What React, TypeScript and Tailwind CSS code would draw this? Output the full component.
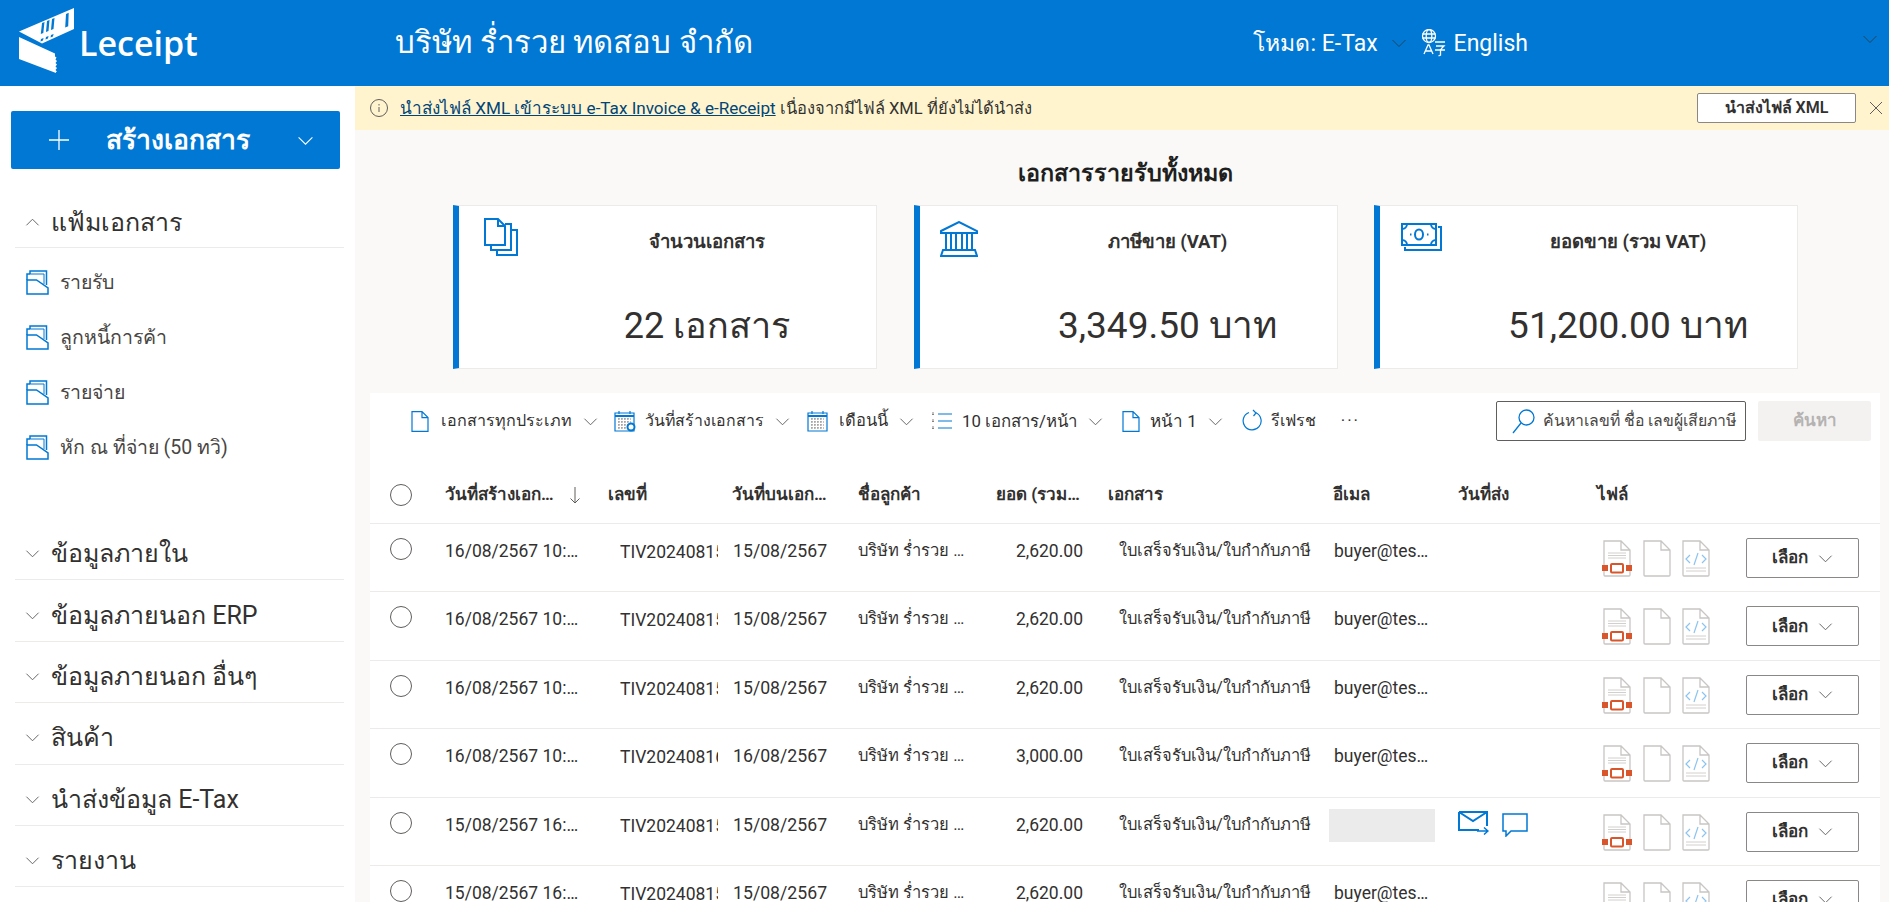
import React from "react";

const Chev = ({ up, className = "", color = "currentColor", size = 16 }: { up?: boolean; className?: string; color?: string; size?: number }) => (
  <svg width={size} height={size} viewBox="0 0 16 16" className={"shrink-0 " + className} fill="none" stroke={color} strokeWidth="1">
    <path d={up ? "M1.5 11 8 4.5 14.5 11" : "M1.5 5 8 11.5 14.5 5"} />
  </svg>
);

const Logo = () => (
  <svg width="58" height="70" viewBox="0 0 58 70" className="shrink-0">
    <path fillRule="evenodd" fill="#fff" d="M1 23.5 56 0v21L24 35.5 1 23.5ZM24 15l-1.200 11 2.500-1 1.200-11-2.500 1Zm5-2-1 11 2.500-1 1-11-2.500 1Zm5-2-1 11 2.500-1 1-11-2.500 1Zm14-5-.8 13.500 3-1.300.5-13.500-2.700 1.300ZM23 31l-.5 2.500 2.500-1 .5-2.500-2.500 1Zm5-2-.5 2.500 2.500-1 .5-2.500-2.500 1Zm5-2-.5 2.500 2.500-1 .5-2.500-2.500 1Z" />
    <path fill="#fff" d="M1 29 37 45.500v3l1.500 1-1 2 1.500 1.500-1.500 2 1.500 1.500-1.500 2 1.500 1.500-1.500 2 1.500 1.500-1 .5v1L1 51V29Z" />
  </svg>
);

const Globe = () => (
  <svg width="25" height="28" viewBox="0 0 25 28" fill="none" stroke="#fff" strokeWidth="1.300" className="shrink-0">
    <circle cx="8" cy="7" r="6.500" />
    <ellipse cx="8" cy="7" rx="2.800" ry="6.500" />
    <path d="M1.500 5h13M1.500 9h13" />
    <path d="M3 25l4-9h1l4 9M4.500 22h6" />
    <path d="M14 13h10M15 17h8l-3 3M14 21h10M19.500 20v6l-2 1" />
  </svg>
);

const DocsIcon = () => (
  <svg width="34" height="38" viewBox="0 0 34 38" fill="none" stroke="#0078d4" strokeWidth="2">
    <path d="M1 1h13l7 7v19H1V1ZM14 1v7h7" />
    <path d="M21 6h6v26H7v-5" />
    <path d="M27 12h6v25H13v-5" />
  </svg>
);
const BankIcon = () => (
  <svg width="38" height="36" viewBox="0 0 38 36" fill="none" stroke="#0078d4" strokeWidth="2">
    <path d="M1 10 19 1l18 9v2H1v-2ZM6 12v17M11 12v17M16 12v17M22 12v17M27 12v17M32 12v17M3 29h32l2 6H1l2-6Z" />
  </svg>
);
const MoneyIcon = () => (
  <svg width="41" height="28" viewBox="0 0 41 28" fill="none" stroke="#0078d4" strokeWidth="2">
    <rect x="1" y="1" width="34" height="21" />
    <path d="M37 4h3v23H4v-3" />
    <ellipse cx="18" cy="11.500" rx="4" ry="5" />
    <path d="M1 6a5 5 0 0 0 5-5M30 1a5 5 0 0 0 5 5M1 17a5 5 0 0 1 5 5M35 17a5 5 0 0 0-5 5M9 11.500h1.500M26 11.500h1.500" />
  </svg>
);
const FolderIcon = () => (
  <svg width="23" height="25" viewBox="0 0 23 25" fill="none" stroke="#0078d4" strokeWidth="1.500" className="shrink-0">
    <path d="M1 10h9.500L22 18v6H1V10Z" />
    <path d="M1 10V4h3M4 4V1h16.500v14" />
    <path d="M4 4h14v10" strokeWidth="1" />
  </svg>
);
const PageIcon = ({ w = 18, h = 21 }: { w?: number; h?: number }) => (
  <svg width={w} height={h} viewBox="0 0 18 21" fill="none" stroke="#0078d4" strokeWidth="1.200" className="shrink-0">
    <path d="M1 .6h10l6 6v13.800H1V.6ZM11 .6v6h6" />
  </svg>
);
const CalIcon = ({ gear }: { gear?: boolean }) => (
  <svg width="22" height="22" viewBox="0 0 22 22" fill="none" className="shrink-0">
    <path d="M1 3h19v18H1V3Z" stroke="#0078d4" strokeWidth="1.200" />
    <path d="M1 6h19" stroke="#0078d4" strokeWidth="2" />
    <path d="M5 1v3M16 1v3" stroke="#0078d4" strokeWidth="1.200" />
    <path d="M4 9h13M4 12h13M4 15h13M4 18h13M5 8v11M8 8v11M11 8v11M14 8v11" stroke="#8a8886" strokeWidth="1" strokeDasharray="1.500 1.500" />
    {gear && <circle cx="17" cy="17" r="3.500" fill="#fff" stroke="#0078d4" strokeWidth="2" />}
  </svg>
);
const ListIcon = () => (
  <svg width="20" height="20" viewBox="0 0 20 20" fill="none" className="shrink-0">
    <path d="M6 3h14M6 10h14M6 17h14" stroke="#0078d4" strokeWidth="1.200" />
    <path d="M1 1.500v3M1 8.500v3M1 15.500v3" stroke="#605e5c" strokeWidth="1.500" strokeDasharray="1 .6" />
  </svg>
);
const RefreshIcon = () => (
  <svg width="20" height="24" viewBox="0 0 20 24" fill="none" stroke="#0078d4" strokeWidth="1.200" className="shrink-0">
    <path d="M7 3.500a9 9 0 1 0 7 .3" />
    <path d="M11 1l3 3-2.500 3" />
  </svg>
);
const SearchIcon = () => (
  <svg width="23" height="25" viewBox="0 0 23 25" fill="none" stroke="#0078d4" strokeWidth="1.300" className="shrink-0">
    <circle cx="14.500" cy="8.500" r="7.500" />
    <path d="M9 14 1 24" />
  </svg>
);
const PdfIcon = ({ active = true }: { active?: boolean }) => (
  <svg width="30" height="37" viewBox="0 0 30 37" fill="none" className="shrink-0">
    <path d="M2 1h17l9 9v25a1 1 0 0 1-1 1H3a1 1 0 0 1-1-1V1ZM19 1v9h9" stroke="#c8c6c4" strokeWidth="1.300" fill="#fff" />
    <path d="M6 13h18M6 15.500h18M6 18h18" stroke="#d2d0ce" strokeWidth="1" />
    {active && (
      <>
        <rect x="0" y="25" width="6" height="6" fill="#d9552b" />
        <rect x="24" y="25" width="6" height="6" fill="#d9552b" />
        <rect x="9" y="24" width="12" height="8.500" rx="1" stroke="#d9552b" strokeWidth="2" fill="#fff" />
      </>
    )}
  </svg>
);
const BlankFileIcon = () => (
  <svg width="28" height="37" viewBox="0 0 28 37" fill="none" className="shrink-0">
    <path d="M1 1h17l9 9v25a1 1 0 0 1-1 1H2a1 1 0 0 1-1-1V1ZM18 1v9h9" stroke="#c8c6c4" strokeWidth="1.300" />
  </svg>
);
const XmlIcon = () => (
  <svg width="28" height="37" viewBox="0 0 28 37" fill="none" className="shrink-0">
    <path d="M1 1h17l9 9v25a1 1 0 0 1-1 1H2a1 1 0 0 1-1-1V1ZM18 1v9h9" stroke="#c8c6c4" strokeWidth="1.300" />
    <path d="M8 15l-4 4 4 4M20 15l4 4-4 4M16 13l-4 12" stroke="#8cc4f0" strokeWidth="1.200" />
    <path d="M4 28h20M4 31h20" stroke="#d2d0ce" strokeWidth="1" />
  </svg>
);
const MailSend = () => (
  <svg width="31" height="24" viewBox="0 0 31 24" fill="none" stroke="#0078d4" strokeWidth="2" className="shrink-0">
    <path d="M1 1h28v14M1 1v18h20M1 1l14 9 14-9" />
    <path d="M19 20h11M26 16.500l4 3.500-4 3.500" strokeWidth="1.500" />
  </svg>
);
const Chat = () => (
  <svg width="26" height="24" viewBox="0 0 26 24" fill="none" stroke="#0078d4" strokeWidth="1.500" className="shrink-0">
    <path d="M1 1h24v17H9l-5 5v-5H1V1Z" />
  </svg>
);
const SortDown = () => (
  <svg width="12" height="20" viewBox="0 0 12 20" fill="none" stroke="#605e5c" strokeWidth="1" className="shrink-0">
    <path d="M6 2v16M1.500 13.500 6 18l4.500-4.500" />
  </svg>
);

const XIcon = ({ className = "" }: { className?: string }) => (
  <svg width="14" height="14" viewBox="0 0 14 14" className={className} fill="none" stroke="#605e5c" strokeWidth="1">
    <path d="M1 1l12 12M13 1 1 13" />
  </svg>
);

const groups = ["ข้อมูลภายใน", "ข้อมูลภายนอก ERP", "ข้อมูลภายนอก อื่นๆ", "สินค้า", "นำส่งข้อมูล E-Tax", "รายงาน"];
const folders = ["รายรับ", "ลูกหนี้การค้า", "รายจ่าย", "หัก ณ ที่จ่าย (50 ทวิ)"];

const Sidebar = () => (
  <aside className="w-[355px] shrink-0 bg-white pt-[25px] overflow-hidden">
    <div className="ml-[11px] w-[329px] h-[58px] bg-[#0078d4] rounded-[2px] flex items-center text-white">
      <svg width="22" height="22" viewBox="0 0 22 22" className="ml-[37px]" stroke="#fff" strokeWidth="1.300">
        <path d="M11 1v20M1 11h20" />
      </svg>
      <span className="ml-[36px] w-[144px] text-center text-[26.500px] font-bold leading-none whitespace-nowrap">สร้างเอกสาร</span>
      <Chev className="ml-[47px]" color="#fff" size={17} />
    </div>
    <div className="mt-[26px] ml-[15px] w-[329px] h-[53px] flex items-center border-b border-[#edebe9] pt-[2px] text-[#323130]">
      <Chev up className="ml-[10px]" color="#605e5c" size={15} />
      <span className="ml-[11px] text-[25px] leading-none">แฟ้มเอกสาร</span>
    </div>
    <div className="mt-[7px]">
      {folders.map((f) => (
        <div key={f} className="h-[55px] flex items-center pl-[26px] gap-[11px] text-[#484644] text-[19.500px]">
          <FolderIcon />
          <span>{f}</span>
        </div>
      ))}
    </div>
    <div className="mt-[44px]">
      {groups.map((g) => (
        <div key={g} className="ml-[15px] w-[329px] h-[61.400px] flex items-center border-b border-[#edebe9] pt-[9px] text-[#323130]">
          <Chev className="ml-[10px]" color="#605e5c" size={15} />
          <span className="ml-[11px] text-[25px] leading-none">{g}</span>
        </div>
      ))}
    </div>
  </aside>
);

const Card = ({ icon, label, value, valueClass = "text-[37px]" }: { icon: React.ReactNode; label: string; value: string; valueClass?: string }) => (
  <div className="w-[424px] h-[164px] bg-white border border-[#edebe9] border-l-[6px] border-l-[#0078d4] flex">
    <div className="w-[79px] shrink-0 pl-[25px] pt-[12px]">{icon}</div>
    <div className="flex-1 flex flex-col items-center">
      <div className="mt-[23px] text-[18.500px] font-bold text-[#323130] leading-[26px]">{label}</div>
      <div className={"mt-[46px] text-[#323130] leading-[50px] " + valueClass}>{value}</div>
    </div>
  </div>
);

const ToolItem = ({ icon, label, size, chev = true, gap = 11, after = 19 }: { icon: React.ReactNode; label: string; size: number; chev?: boolean; gap?: number; after?: number }) => (
  <div className="flex items-center shrink-0" style={{ marginRight: after }}>
    {icon}
    <span className="text-[#323130] leading-none whitespace-nowrap" style={{ marginLeft: gap, fontSize: size }}>{label}</span>
    {chev && <Chev className="ml-[11px]" color="#605e5c" size={15} />}
  </div>
);

const Circle = () => <span className="block w-[22px] h-[22px] rounded-full border border-[#605e5c] bg-white" />;

type Row = { created: string; no: string; date: string; amount: string; redacted?: boolean };
const rows: Row[] = [
  { created: "16/08/2567 10:15:22", no: "TIV2024081500005", date: "15/08/2567", amount: "2,620.00" },
  { created: "16/08/2567 10:14:09", no: "TIV2024081500004", date: "15/08/2567", amount: "2,620.00" },
  { created: "16/08/2567 10:12:47", no: "TIV2024081500003", date: "15/08/2567", amount: "2,620.00" },
  { created: "16/08/2567 10:05:31", no: "TIV2024081600001", date: "16/08/2567", amount: "3,000.00" },
  { created: "15/08/2567 16:40:18", no: "TIV2024081500002", date: "15/08/2567", amount: "2,620.00", redacted: true },
  { created: "15/08/2567 16:32:02", no: "TIV2024081500001", date: "15/08/2567", amount: "2,620.00" },
];

const HeaderCell = ({ w, children, className = "" }: { w: string; children: React.ReactNode; className?: string }) => (
  <div className={w + " shrink-0 flex items-center whitespace-nowrap " + className}>{children}</div>
);

const Table = () => (
  <div>
    <div className="h-[57px] mt-[18px] flex items-center text-[17px] font-bold text-[#323130] border-b border-[#edebe9]">
      <div className="w-[20px] shrink-0" />
      <div className="w-[55px] shrink-0"><Circle /></div>
      <HeaderCell w="w-[163px]">
        <span className="w-[112px] truncate">วันที่สร้างเอกสาร</span>
        <span className="ml-[12px]"><SortDown /></span>
      </HeaderCell>
      <HeaderCell w="w-[124px]">เลขที่</HeaderCell>
      <HeaderCell w="w-[126px]"><span className="w-[98px] truncate">วันที่บนเอกสาร</span></HeaderCell>
      <HeaderCell w="w-[138px]">ชื่อลูกค้า</HeaderCell>
      <HeaderCell w="w-[112px]"><span className="w-[87px] truncate">ยอด (รวม VAT)</span></HeaderCell>
      <HeaderCell w="w-[225px]">เอกสาร</HeaderCell>
      <HeaderCell w="w-[125px]">อีเมล</HeaderCell>
      <HeaderCell w="w-[139px]">วันที่ส่ง</HeaderCell>
      <HeaderCell w="w-[100px]">ไฟล์</HeaderCell>
    </div>
    {rows.map((r, i) => (
      <div key={i} className="h-[68.400px] flex items-start text-[17.500px] text-[#323130] border-b border-[#edebe9]">
        <div className="w-[20px] shrink-0" />
        <div className="w-[55px] shrink-0 pt-[14px]"><Circle /></div>
        <div className="w-[163px] shrink-0 pt-[14px] leading-[26px]">
          <div className="w-[136px] truncate">{r.created}</div>
        </div>
        <div className="w-[124px] shrink-0 pt-[15px] leading-[26px] pl-[12px]">
          <div className="w-[98px] overflow-hidden whitespace-nowrap">{r.no}</div>
        </div>
        <div className="w-[126px] shrink-0 pt-[14px] leading-[26px] pl-[1px] text-[17.700px]">{r.date}</div>
        <div className="w-[138px] shrink-0 pt-[14px] leading-[26px] text-[16.500px]">
          <div className="w-[108px] truncate">บริษัท ร่ำรวย ทดสอบ จำกัด</div>
        </div>
        <div className="w-[87px] shrink-0 pt-[14px] leading-[26px] text-right">{r.amount}</div>
        <div className="w-[25px] shrink-0" />
        <div className="w-[225px] shrink-0 pt-[14px] leading-[26px] pl-[11px] text-[16.500px]">
          <div className="w-[193px] overflow-hidden whitespace-nowrap">ใบเสร็จรับเงิน/ใบกำกับภาษี</div>
        </div>
        <div className="w-[125px] shrink-0 pt-[14px] leading-[26px]">
          {r.redacted ? (
            <div className="-ml-[4px] -mt-[3px] w-[106px] h-[33px] bg-[#ebebeb]" />
          ) : (
            <div className="w-[100px] truncate pl-[1px]">buyer@test.com</div>
          )}
        </div>
        <div className="w-[139px] shrink-0 pt-[13px] flex gap-[13px]">
          {r.redacted && (
            <>
              <MailSend />
              <span className="mt-[2px]"><Chat /></span>
            </>
          )}
        </div>
        <div className="w-[149px] shrink-0 pt-[16px] pl-[5px] flex gap-[11px]">
          <PdfIcon active={i < 5} />
          <BlankFileIcon />
          <XmlIcon />
        </div>
        <div className="pt-[14px] shrink-0">
          <div className="w-[113px] h-[40px] rounded-[2px] border border-[#8a8886] bg-white flex items-center justify-center gap-[10px] font-semibold text-[17px]">
            <span>เลือก</span>
            <Chev color="#605e5c" size={15} />
          </div>
        </div>
      </div>
    ))}
  </div>
);

export default function App() {
  return (
    <div className="h-screen w-full overflow-hidden flex flex-col bg-[#faf9f8] font-['Roboto','Noto_Sans',sans-serif]">
      <header className="h-[86px] shrink-0 bg-[#0078d4] flex items-center text-white">
        <div className="w-[395px] shrink-0 flex items-center pl-[18px]">
          <Logo />
          <span className="ml-[3px] text-[34px] font-semibold leading-none font-['Open_Sans',sans-serif]">Leceipt</span>
        </div>
        <div className="text-[31.100px] leading-none">บริษัท ร่ำรวย ทดสอบ จำกัด</div>
        <div className="ml-auto flex items-center">
          <span className="text-[23px] leading-none">โหมด: E-Tax</span>
          <Chev className="ml-[13px] opacity-70" color="#323130" size={16} />
          <span className="ml-[14px]"><Globe /></span>
          <span className="ml-[8px] text-[23px] leading-none">English</span>
          <Chev className="ml-[334px] -mt-[8px] opacity-70" color="#323130" size={16} />
          <span className="w-[11px]" />
        </div>
      </header>
      <div className="flex flex-1 min-h-0">
        <Sidebar />
        <main className="flex-1 min-w-0 overflow-hidden">
          <div className="h-[44px] bg-[#fff4ce] flex items-center text-[#323130] text-[17.100px]">
            <svg width="18" height="18" viewBox="0 0 18 18" fill="none" stroke="#605e5c" strokeWidth="1" className="ml-[15px] shrink-0">
              <circle cx="9" cy="9" r="8.500" />
              <path d="M9 8v5M9 5v1.500" />
            </svg>
            <span className="ml-[12px] mt-[2px] whitespace-nowrap">
              <span className="underline text-[#004578]">นำส่งไฟล์ XML เข้าระบบ e-Tax Invoice &amp; e-Receipt</span>{" "}
              <span className="text-[16.500px]">เนื่องจากมีไฟล์ XML ที่ยังไม่ได้นำส่ง</span>
            </span>
            <div className="ml-auto w-[159px] h-[30px] bg-white border border-[#8a8886] rounded-[2px] flex items-center justify-center font-semibold text-[16px]">นำส่งไฟล์ XML</div>
            <XIcon className="ml-[13px] mr-[6px]" />
          </div>
          <div className="pt-[25px] pr-[91px] pl-[98px]">
            <div className="text-center text-[23.300px] font-bold text-[#201f1e] leading-[36px]">เอกสารรายรับทั้งหมด</div>
            <div className="mt-[14px] flex justify-between">
              <Card icon={<DocsIcon />} label="จำนวนเอกสาร" value="22 เอกสาร" valueClass="text-[36px]" />
              <Card icon={<span className="block pt-[3px] -ml-[5px]"><BankIcon /></span>} label="ภาษีขาย (VAT)" value="3,349.50 บาท" />
              <Card icon={<span className="block pt-[5px] -ml-[4px]"><MoneyIcon /></span>} label="ยอดขาย (รวม VAT)" value="51,200.00 บาท" />
            </div>
          </div>
          <section className="mt-[24px] ml-[15px] mr-[9px] bg-white">
            <div className="h-[56px] flex items-center pl-[41px] pr-[9px]">
              <ToolItem icon={<PageIcon />} label="เอกสารทุกประเภท" size={16.1} gap={12} after={16} />
              <ToolItem icon={<CalIcon gear />} label="วันที่สร้างเอกสาร" size={15.9} gap={9} after={17} />
              <ToolItem icon={<CalIcon />} label="เดือนนี้" size={16.5} gap={10} after={18} />
              <ToolItem icon={<ListIcon />} label="10 เอกสาร/หน้า" size={16.8} gap={10} />
              <ToolItem icon={<PageIcon />} label="หน้า 1" size={17} gap={10} />
              <ToolItem icon={<RefreshIcon />} label="รีเฟรช" size={16} chev={false} gap={9} after={25} />
              <span className="text-[#323130] text-[17px] tracking-[2px] leading-none -mt-[2px]">···</span>
              <div className="ml-auto w-[250px] h-[40px] rounded-[2px] border border-[#605e5c] flex items-center pl-[15px] gap-[8px] text-[15.800px] text-[#484644] overflow-hidden whitespace-nowrap">
                <SearchIcon />
                <span>ค้นหาเลขที่ ชื่อ เลขผู้เสียภาษี</span>
              </div>
              <div className="ml-[12px] w-[113px] h-[40px] rounded-[2px] bg-[#f3f2f1] text-[#b5b3b1] font-semibold text-[17px] flex items-center justify-center">ค้นหา</div>
            </div>
            <Table />
          </section>
        </main>
      </div>
    </div>
  );
}
